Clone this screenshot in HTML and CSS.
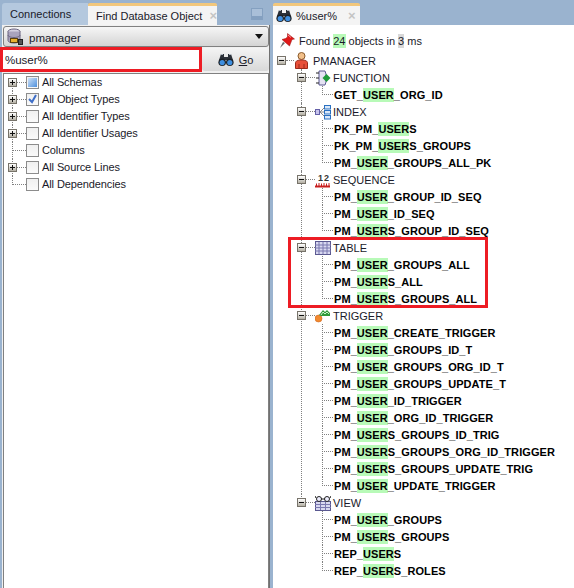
FILE: index.html
```html
<!DOCTYPE html>
<html lang="en">
<head>
    <meta charset="UTF-8">
    <meta name="viewport" content="width=device-width, initial-scale=1.0">
    <title>Find Database Object</title>
    <link rel="stylesheet" href="styles.css">
</head>
<body>
    <svg class="defs" width="0" height="0">
        <symbol id="binoculars" viewBox="0 0 16 14">
            <path d="M3 1h3v3h4V1h3l2 6H1z" fill="#2b3038"/>
            <circle cx="4.200" cy="9.200" r="3.800" fill="#1c2026"/>
            <circle cx="11.800" cy="9.200" r="3.800" fill="#1c2026"/>
            <circle cx="4.200" cy="9.600" r="2.600" fill="#3f8fe0"/>
            <circle cx="11.800" cy="9.600" r="2.600" fill="#3f8fe0"/>
            <path d="M3 1.500h2M11 1.500h2" stroke="#aeb6c0"/>
        </symbol>
    </svg>

    <div class="left-pane">
        <div class="tabs">
            <div class="tab">Connections</div>
            <div class="tab active">Find Database Object<span class="close">×</span></div>
            <div class="minimize"></div>
        </div>
        <div class="pane-body">
            <div class="combo">
                <svg width="17" height="17" viewBox="0 0 17 17">
                    <ellipse cx="7" cy="3.500" rx="6" ry="2.500" fill="#d4d0e0" stroke="#6a6480"/>
                    <path d="M1 3.500v9c0 1.400 2.700 2.500 6 2.500s6-1.100 6-2.500v-9" fill="#a9a3bd" stroke="#6a6480"/>
                    <path d="M1 7c0 1.400 2.700 2.500 6 2.500s6-1.100 6-2.500" fill="none" stroke="#6a6480"/>
                    <rect x="3.500" y="10.500" width="7" height="4" fill="#e8b030" stroke="#5a4010"/>
                    <rect x="11.500" y="11.500" width="4" height="5" fill="#555" stroke="#222"/>
                </svg>
                <span class="combo-text">pmanager</span>
                <span class="arrow"></span>
            </div>
            <div class="search-row">
                <div class="search-box">%user%</div>
                <div class="go-btn">
                    <svg width="16" height="14"><use href="#binoculars"/></svg>
                    <span><u>G</u>o</span>
                </div>
            </div>
            <ul class="filters">
                <li class="filter"><span class="toggle plus"></span><span class="check mixed"></span><span class="filter-label">All Schemas</span></li>
                <li class="filter"><span class="toggle plus"></span><span class="check">
                    <svg width="11" height="11" viewBox="0 0 11 11"><path d="M2 5l3 3 4-7" fill="none" stroke="#3f6fc8" stroke-width="2"/></svg>
                </span><span class="filter-label">All Object Types</span></li>
                <li class="filter"><span class="toggle plus"></span><span class="check"></span><span class="filter-label">All Identifier Types</span></li>
                <li class="filter"><span class="toggle plus"></span><span class="check"></span><span class="filter-label">All Identifier Usages</span></li>
                <li class="filter"><span class="toggle none"></span><span class="check"></span><span class="filter-label">Columns</span></li>
                <li class="filter"><span class="toggle plus"></span><span class="check"></span><span class="filter-label">All Source Lines</span></li>
                <li class="filter"><span class="toggle none"></span><span class="check"></span><span class="filter-label">All Dependencies</span></li>
            </ul>
        </div>
    </div>

    <div class="right-pane">
        <div class="tabs">
            <div class="tab active result-tab">
                <svg width="16" height="14"><use href="#binoculars"/></svg>
                %user%<span class="close">×</span>
            </div>
        </div>
        <div class="results">
            <div class="found">
                <svg width="16" height="16" viewBox="0 0 16 16">
                    <path d="M6 10l-5 5 3-6z" fill="#666"/>
                    <path d="M8.500 0.500l7 5.500-2.500.5-1.500 4-1 2.500-7.500-6.500 3.500-1 2-1.500z" fill="#e01818" stroke="#901010" stroke-width=".5"/>
                    <path d="M9 2l3 2.500" stroke="#f8a0a0"/>
                </svg>
                <span>Found <mark>24</mark> objects in <mark class="grey">3</mark> ms</span>
            </div>
            <div class="root row">
                <span class="toggle minus"></span>
                <svg class="icon-user" width="13" height="17" viewBox="0 0 13 17">
                    <circle cx="6.500" cy="4" r="3.500" fill="#f2c08a" stroke="#8a5a2a"/>
                    <path d="M0.500 16.500V11c0-2 2-3 6-3s6 1 6 3v5.500z" fill="#e8503a" stroke="#9a2a1a"/>
                    <path d="M4 12v4M9 12v4" stroke="#9a2a1a"/>
                </svg>
                <span class="group-label">PMANAGER</span>
            </div>
            <ul class="groups">
                <li class="group">
                    <div class="row">
                        <span class="toggle minus"></span>
                        <svg width="16" height="16" viewBox="0 0 16 16">
                            <path d="M4 1h6l1 3v8l-1 3H4z" fill="#e4e2f2" stroke="#5a5890"/>
                            <path d="M1 3h3M1 8h3M1 13h3" stroke="#222"/>
                            <path d="M11.500 4l4 4-4 4-4-4z" fill="#1e9a3a"/>
                        </svg>
                        <span class="group-label">FUNCTION</span>
                    </div>
                    <ul class="items">
                        <li class="item"><span>GET_<mark>USER</mark>_ORG_ID</span></li>
                    </ul>
                </li>
                <li class="group">
                    <div class="row">
                        <span class="toggle minus"></span>
                        <svg width="16" height="16" viewBox="0 0 16 16">
                            <rect x="0.500" y="5.500" width="4" height="5" fill="#c8c4ec" stroke="#6460a8"/>
                            <path d="M5 8l5-5M5 8h5M5 8l5 5" stroke="#888"/>
                            <rect x="9.500" y="1.500" width="6" height="3.500" fill="#d8e8fa" stroke="#2a70c0"/>
                            <rect x="9.500" y="6.500" width="6" height="3.500" fill="#d8e8fa" stroke="#2a70c0"/>
                            <rect x="9.500" y="11.500" width="6" height="3.500" fill="#d8e8fa" stroke="#2a70c0"/>
                        </svg>
                        <span class="group-label">INDEX</span>
                    </div>
                    <ul class="items">
                        <li class="item"><span>PK_PM_<mark>USER</mark>S</span></li>
                        <li class="item"><span>PK_PM_<mark>USER</mark>S_GROUPS</span></li>
                        <li class="item"><span>PM_<mark>USER</mark>_GROUPS_ALL_PK</span></li>
                    </ul>
                </li>
                <li class="group">
                    <div class="row">
                        <span class="toggle minus"></span>
                        <svg width="16" height="16" viewBox="0 0 16 16">
                            <path d="M0 14.500h15" stroke="#c81e1e" stroke-width="2"/>
                            <path d="M1.500 14V11.500M4 14V11M6.500 14v-2.500M9 14v-3M11.500 14v-2.500M14 14v-3" stroke="#c81e1e"/>
                            <text x="3" y="9" class="seq-digit">1</text>
                            <text x="9" y="9" class="seq-digit">2</text>
                        </svg>
                        <span class="group-label">SEQUENCE</span>
                    </div>
                    <ul class="items">
                        <li class="item"><span>PM_<mark>USER</mark>_GROUP_ID_SEQ</span></li>
                        <li class="item"><span>PM_<mark>USER</mark>_ID_SEQ</span></li>
                        <li class="item"><span>PM_<mark>USER</mark>S_GROUP_ID_SEQ</span></li>
                    </ul>
                </li>
                <li class="group">
                    <div class="callout"></div>
                    <div class="row">
                        <span class="toggle minus"></span>
                        <svg width="16" height="16" viewBox="0 0 16 16">
                            <rect x="0.500" y="1.500" width="15" height="13" fill="#d8d8f0" stroke="#5a5890"/>
                            <path d="M0 5h16M0 8h16M0 11h16M4 2v12M8 2v12M12 2v12" stroke="#7a78b0"/>
                        </svg>
                        <span class="group-label">TABLE</span>
                    </div>
                    <ul class="items">
                        <li class="item"><span>PM_<mark>USER</mark>_GROUPS_ALL</span></li>
                        <li class="item"><span>PM_<mark>USER</mark>S_ALL</span></li>
                        <li class="item"><span>PM_<mark>USER</mark>S_GROUPS_ALL</span></li>
                    </ul>
                </li>
                <li class="group">
                    <div class="row">
                        <span class="toggle minus"></span>
                        <svg width="16" height="16" viewBox="0 0 16 16">
                            <circle cx="3.500" cy="10.500" r="3.500" fill="#f28a30" stroke="#c85a10" stroke-width=".5"/>
                            <path d="M4 7l4-5 2 2 2-2 3 3v3H6z" fill="#2f9a3a"/>
                            <path d="M6 7l2-3 2 2 2-2 2 2" fill="none" stroke="#c8f0c8"/>
                        </svg>
                        <span class="group-label">TRIGGER</span>
                    </div>
                    <ul class="items">
                        <li class="item"><span>PM_<mark>USER</mark>_CREATE_TRIGGER</span></li>
                        <li class="item"><span>PM_<mark>USER</mark>_GROUPS_ID_T</span></li>
                        <li class="item"><span>PM_<mark>USER</mark>_GROUPS_ORG_ID_T</span></li>
                        <li class="item"><span>PM_<mark>USER</mark>_GROUPS_UPDATE_T</span></li>
                        <li class="item"><span>PM_<mark>USER</mark>_ID_TRIGGER</span></li>
                        <li class="item"><span>PM_<mark>USER</mark>_ORG_ID_TRIGGER</span></li>
                        <li class="item"><span>PM_<mark>USER</mark>S_GROUPS_ID_TRIG</span></li>
                        <li class="item"><span>PM_<mark>USER</mark>S_GROUPS_ORG_ID_TRIGGER</span></li>
                        <li class="item"><span>PM_<mark>USER</mark>S_GROUPS_UPDATE_TRIG</span></li>
                        <li class="item"><span>PM_<mark>USER</mark>_UPDATE_TRIGGER</span></li>
                    </ul>
                </li>
                <li class="group">
                    <div class="row">
                        <span class="toggle minus"></span>
                        <svg width="16" height="16" viewBox="0 0 16 16">
                            <rect x="0.500" y="6.500" width="15" height="9" fill="#d8d8f0" stroke="#5a5890"/>
                            <path d="M0 9.500h16M0 12.500h16M5.500 7v8M10.500 7v8" stroke="#7a78b0"/>
                            <circle cx="4" cy="4" r="2.500" fill="#eef" stroke="#222"/>
                            <circle cx="12" cy="4" r="2.500" fill="#eef" stroke="#222"/>
                            <path d="M6 4h4M1 3L0 1M15 3l1-2" stroke="#222"/>
                        </svg>
                        <span class="group-label">VIEW</span>
                    </div>
                    <ul class="items">
                        <li class="item"><span>PM_<mark>USER</mark>_GROUPS</span></li>
                        <li class="item"><span>PM_<mark>USER</mark>S_GROUPS</span></li>
                        <li class="item"><span>REP_<mark>USER</mark>S</span></li>
                        <li class="item"><span>REP_<mark>USER</mark>S_ROLES</span></li>
                    </ul>
                </li>
            </ul>
        </div>
    </div>
</body>
</html>
```

FILE: styles.css
```css
* {
    box-sizing: border-box;
}
html, body {
    height: 100%;
}
body {
    margin: 0;
    display: flex;
    gap: 3px;
    overflow: hidden;
    background-color: #9ab3cf;
    font-family: "Liberation Sans", Arial, sans-serif;
    font-size: 11px;
    color: #1a1a2a;
}
ul {
    list-style: none;
    margin: 0;
    padding: 0;
}
.defs {
    position: absolute;
}
.left-pane {
    width: 270px;
    padding-left: 2px;
    display: flex;
    flex-direction: column;
}
.right-pane {
    width: 301px;
    flex: 1;
    display: flex;
    flex-direction: column;
}

/* tabs */
.tabs {
    height: 25px;
    padding-top: 3px;
    display: flex;
    flex-shrink: 0;
    position: relative;
}
.tab {
    display: flex;
    align-items: center;
    width: 86px;
    padding-left: 8px;
    background-color: #b4c8de;
    border-radius: 3px 0 0 0;
    white-space: nowrap;
}
.tab.active {
    width: 129px;
    background-color: #f4f4f4;
    border-top: 3px solid #f2c77c;
    border-radius: 2px 2px 0 0;
}
.result-tab.active {
    width: 87px;
    gap: 4px;
    padding-left: 3px;
}
.close {
    margin-left: 7px;
    color: #c4c4c4;
    font-size: 13px;
    font-weight: bold;
}
.minimize {
    position: absolute;
    left: 249px;
    top: 8px;
    width: 12px;
    height: 12px;
    background-color: #a9bfd8;
    border: 1px solid #84a0c0;
    border-bottom-width: 4px;
}

/* left pane */
.pane-body {
    flex: 1;
    display: flex;
    flex-direction: column;
    background-color: #f0f0f0;
    border-right: 1px solid #707070;
}
.combo {
    height: 21px;
    margin: 1px 0 0 1px;
    padding: 0 5px 0 3px;
    display: flex;
    align-items: center;
    gap: 5px;
    background: linear-gradient(#f6f6f6, #d4d4d4);
    border: 1px solid #808080;
    border-radius: 3px;
}
.combo-text {
    flex: 1;
    padding-top: 2px;
    font-size: 11.500px;
}
.arrow {
    width: 0;
    height: 0;
    border-left: 4px solid transparent;
    border-right: 4px solid transparent;
    border-top: 5px solid #111;
}
.search-row {
    display: flex;
    height: 25px;
    margin-left: -2px;
}
.search-box {
    width: 202px;
    padding-left: 2px;
    display: flex;
    align-items: center;
    background-color: #fff;
    border: 3px solid #ed1c24;
    font-size: 11.500px;
}
.go-btn {
    flex: 1;
    margin: 1px 0;
    display: flex;
    align-items: center;
    justify-content: center;
    gap: 5px;
    background: linear-gradient(#f4f4f4, #d8d8d8);
    border-radius: 3px;
}
.filters {
    flex: 1;
    margin: 1px 0 0 1px;
    padding: 0 0 0 4px;
    background-color: #fff;
    border: 1px solid #808080;
    border-bottom: none;
}
.filter {
    position: relative;
    height: 17px;
    display: flex;
    align-items: center;
}
.filter::before {
    content: "";
    position: absolute;
    left: 4px;
    top: 0;
    height: 100%;
    border-left: 1px dotted #808080;
}
.filter:first-child::before {
    top: 8px;
    height: 9px;
}
.filter:last-child::before {
    height: 9px;
}
.filter::after {
    content: "";
    position: absolute;
    left: 4px;
    width: 16px;
    top: 8px;
    border-top: 1px dotted #808080;
}
.filter .toggle {
    margin-right: 9px;
}
.filter-label {
    margin-bottom: 2px;
    letter-spacing: -0.1px;
}
.check {
    position: relative;
    z-index: 1;
    width: 13px;
    height: 13px;
    margin-right: 3px;
    display: flex;
    align-items: center;
    justify-content: center;
    background: linear-gradient(#f0f0f0, #fafafa);
    border: 1px solid #8c8c8c;
}
.check.mixed::before {
    content: "";
    width: 9px;
    height: 9px;
    background: linear-gradient(135deg, #cfe2f8, #4f90dc);
}

/* expand and collapse boxes */
.toggle {
    position: relative;
    z-index: 1;
    flex-shrink: 0;
    width: 9px;
    height: 9px;
    background: linear-gradient(#fff, #b4b0a4);
    border: 1px solid #77736a;
}
.toggle.none {
    visibility: hidden;
}
.toggle::before {
    content: "";
    position: absolute;
    left: 1px;
    top: 3px;
    width: 5px;
    height: 1px;
    background-color: #111;
}
.toggle.plus::after {
    content: "";
    position: absolute;
    left: 3px;
    top: 1px;
    width: 1px;
    height: 5px;
    background-color: #111;
}

/* results tree */
.results {
    flex: 1;
    padding: 5px 0 0 4px;
    background-color: #fff;
}
.found {
    height: 21px;
    margin-bottom: 1px;
    display: flex;
    align-items: center;
    gap: 4px;
    padding-left: 2px;
}
.row {
    position: relative;
    height: 17px;
    display: flex;
    align-items: center;
}
.row svg {
    position: relative;
    z-index: 1;
    flex-shrink: 0;
    margin-left: 9px;
    background-color: #fff;
}
.root::after {
    content: "";
    position: absolute;
    left: 9px;
    width: 10px;
    top: 8px;
    border-top: 1px dotted #808080;
}
.group-label {
    margin-left: 2px;
}
.root .group-label {
    margin-left: 5px;
}
.groups {
    margin-left: 20px;
}
.group {
    position: relative;
}
.group::before {
    content: "";
    position: absolute;
    left: 4px;
    top: 0;
    height: 100%;
    border-left: 1px dotted #808080;
}
.group:last-child::before {
    height: 9px;
}
.group > .row::after {
    content: "";
    position: absolute;
    left: 9px;
    width: 9px;
    top: 8px;
    border-top: 1px dotted #808080;
}
.items {
    margin-left: 25px;
}
.item {
    position: relative;
    height: 17px;
    padding-left: 12px;
    display: flex;
    align-items: center;
    font-weight: bold;
    letter-spacing: 0.07px;
    color: #000;
}
.item::before {
    content: "";
    position: absolute;
    left: 0;
    top: 0;
    height: 100%;
    border-left: 1px dotted #808080;
}
.item:last-child::before {
    height: 9px;
}
.item::after {
    content: "";
    position: absolute;
    left: 0;
    top: 8px;
    width: 11px;
    border-top: 1px dotted #808080;
}
mark {
    color: inherit;
    background-color: #b8fab8;
    padding: 1px 0;
}
mark.grey {
    background-color: #d8d8d8;
}
.seq-digit {
    font-size: 9px;
    font-weight: bold;
    fill: #333;
}
.callout {
    position: absolute;
    z-index: 2;
    left: -9px;
    top: -2px;
    width: 200px;
    height: 71px;
    border: 3px solid #ed1c24;
    pointer-events: none;
}
```
